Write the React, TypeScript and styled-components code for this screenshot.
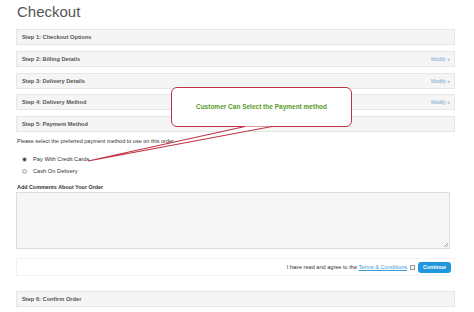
import React from "react";
import styled, { createGlobalStyle } from "styled-components";

const Global = createGlobalStyle`
  html, body { margin: 0; padding: 0; background: #ffffff; }
  body { font-family: "Liberation Sans", Arial, sans-serif; color: #333; }
`;

const Page = styled.div`
  position: relative;
  width: 474px;
  height: 312px;
  padding: 0 19px 0 16px;
  box-sizing: border-box;
  overflow: hidden;
`;

const Title = styled.h1`
  margin: 0 0 10px 1px;
  padding-top: 4px;
  font-size: 15px;
  line-height: 15px;
  font-weight: normal;
  color: #555;
`;

const Steps = styled.div`
  display: flex;
  flex-direction: column;
  gap: 5.75px;
`;

const StepBar = styled.div<{ $top?: number }>`
  display: flex;
  align-items: center;
  justify-content: space-between;
  box-sizing: border-box;
  height: 16px;
  margin-top: ${(p) => p.$top ?? 0}px;
  padding: 0 4px 0 5px;
  background: #f5f5f5;
  border: 1px solid #e6e6e6;
  font-size: 5.7px;
  font-weight: bold;
  color: #555;
`;

const Modify = styled.span`
  font-size: 5px;
  font-weight: normal;
  color: #6fa5d6;
`;

const Note = styled.p`
  margin: 5px 0 0 1px;
  font-size: 5.5px;
  line-height: 8px;
  color: #333;
`;

const RadioList = styled.div`
  display: flex;
  flex-direction: column;
  gap: 2px;
  margin: 9px 0 0 6px;
`;

const RadioRow = styled.label`
  display: flex;
  align-items: center;
  gap: 6px;
  height: 10px;
  font-size: 5.7px;
  color: #333;
`;

const Radio = styled.span<{ $on?: boolean }>`
  box-sizing: border-box;
  width: 5px;
  height: 5px;
  border-radius: 50%;
  border: 1px solid #aaa;
  background: ${(p) => (p.$on ? "radial-gradient(circle, #444 0 1.3px, #ddd 1.6px)" : "#eee")};
`;

const FieldLabel = styled.div`
  margin: 7px 0 0 1px;
  font-size: 5.4px;
  line-height: 8px;
  font-weight: bold;
  color: #333;
`;

const Comments = styled.div`
  position: relative;
  box-sizing: border-box;
  width: 434px;
  height: 57px;
  margin-top: 1px;
  background: #f6f6f6;
  border: 1px solid #dcdcdc;
  &::after {
    content: "";
    position: absolute;
    right: 1px;
    bottom: 1px;
    width: 4px;
    height: 4px;
    background: linear-gradient(135deg, transparent 45%, #aaa 45% 55%, transparent 55% 70%, #aaa 70% 80%, transparent 80%);
  }
`;

const AgreeBar = styled.div`
  display: flex;
  align-items: center;
  justify-content: flex-end;
  gap: 3px;
  box-sizing: border-box;
  height: 18px;
  margin-top: 9px;
  padding-right: 3px;
  border: 1px solid #f2f2f2;
  font-size: 5.6px;
  color: #333;
`;

const TermsLink = styled.a`
  color: #3b9ad8;
  text-decoration: underline;
`;

const Check = styled.span`
  box-sizing: border-box;
  width: 5px;
  height: 5px;
  border: 1px solid #999;
  background: #f4f4f4;
`;

const ContinueButton = styled.button`
  height: 11px;
  padding: 0 5px;
  border: none;
  border-radius: 3px;
  background: #1f98de;
  color: #fff;
  font-family: "Liberation Sans", Arial, sans-serif;
  font-size: 5.3px;
  font-weight: bold;
  width: 33px;
`;

const Callout = styled.div`
  position: absolute;
  left: 171px;
  top: 87px;
  width: 181px;
  height: 40px;
  box-sizing: border-box;
  border: 1.3px solid #bf3444;
  border-radius: 6px;
  background: #fff;
  display: flex;
  align-items: center;
  justify-content: center;
  padding-bottom: 2px;
  font-size: 6.5px;
  font-weight: bold;
  color: #5a9a2a;
  z-index: 2;
`;

const TailSvg = styled.svg`
  position: absolute;
  left: 0;
  top: 0;
  z-index: 3;
  pointer-events: none;
`;

export default function App() {
  return (
    <>
      <Global />
      <Page>
        <Title>Checkout</Title>
        <Steps>
          <StepBar>Step 1: Checkout Options</StepBar>
          <StepBar>
            Step 2: Billing Details <Modify>Modify »</Modify>
          </StepBar>
          <StepBar>
            Step 3: Delivery Details <Modify>Modify »</Modify>
          </StepBar>
          <StepBar>
            Step 4: Delivery Method <Modify>Modify »</Modify>
          </StepBar>
          <StepBar>Step 5: Payment Method</StepBar>
        </Steps>
        <Note>Please select the preferred payment method to use on this order.</Note>
        <RadioList>
          <RadioRow>
            <Radio $on />
            Pay With Credit Cards
          </RadioRow>
          <RadioRow>
            <Radio />
            Cash On Delivery
          </RadioRow>
        </RadioList>
        <FieldLabel>Add Comments About Your Order</FieldLabel>
        <Comments />
        <AgreeBar>
          <span>
            I have read and agree to the <TermsLink>Terms &amp; Conditions</TermsLink>
          </span>
          <Check />
          <ContinueButton>Continue</ContinueButton>
        </AgreeBar>
        <StepBar $top={15}>Step 6: Confirm Order</StepBar>
        <Callout>Customer Can Select the Payment method</Callout>
        <TailSvg width="474" height="312" viewBox="0 0 474 312">
          <path d="M245 126.5 L88 161 L272 126.5" fill="#fff" stroke="#bf3444" strokeWidth="1.1" strokeLinejoin="miter" />
        </TailSvg>
      </Page>
    </>
  );
}
